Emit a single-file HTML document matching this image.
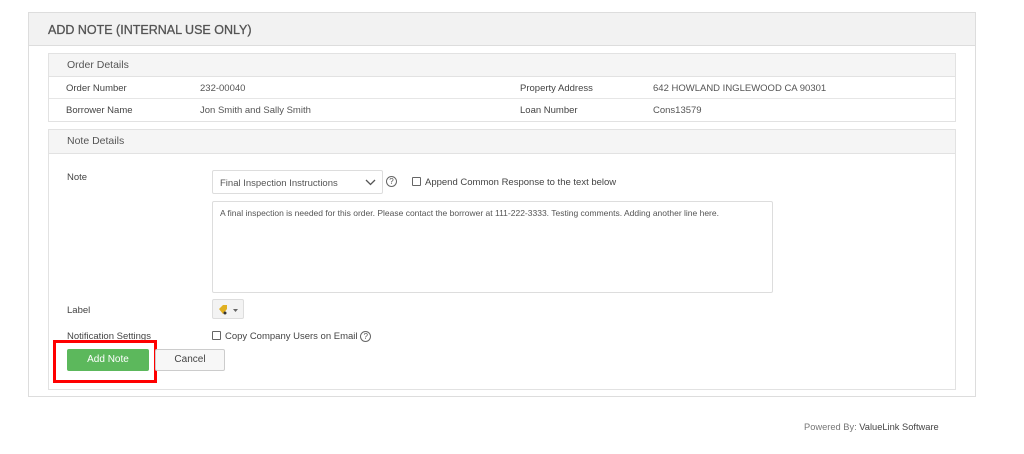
<!DOCTYPE html>
<html><head><style>
*{box-sizing:border-box;margin:0;padding:0}
body{width:1024px;height:454px;background:#fff;font-family:"Liberation Sans",sans-serif;font-size:9.5px;color:#555;position:relative;overflow:hidden}
.a{position:absolute}
.outer{left:28px;top:12px;width:948px;height:385px;border:1px solid #ddd}
.hdr{left:28px;top:12px;width:948px;height:34px;background:#f2f2f2;border:1px solid #ddd;font-size:12.5px;color:#555;padding:10px 0 0 19px;-webkit-text-stroke:0.3px #555}
.panel{border:1px solid #e2e2e2}
.ph{background:#f5f5f5;border-bottom:1px solid #e2e2e2;font-size:10.5px;color:#555;padding:5px 0 0 18px}
.row{border-bottom:1px solid #e6e6e6;height:22px}
.lbl{color:#444}
.cb{display:inline-block;width:9px;height:9px;border:1px solid #666;border-radius:1px;vertical-align:-1px;margin-right:4px}
.q{display:inline-block;width:11px;height:11px;border:1px solid #666;border-radius:50%;font-size:8px;text-align:center;line-height:9px;color:#555}
</style></head><body>
<div class="a outer"></div>
<div class="a hdr">ADD NOTE (INTERNAL USE ONLY)</div>
<div class="a panel" style="left:48px;top:53px;width:908px;height:69px">
 <div class="ph" style="height:23px">Order Details</div>
 <div class="row"></div><div class="row" style="border:0"></div>
</div>
<div class="a lbl" style="left:66px;top:83px">Order Number</div>
<div class="a" style="left:200px;top:83px">232-00040</div>
<div class="a lbl" style="left:520px;top:83px">Property Address</div>
<div class="a" style="left:653px;top:83px">642 HOWLAND INGLEWOOD CA 90301</div>
<div class="a lbl" style="left:66px;top:105px">Borrower Name</div>
<div class="a" style="left:200px;top:105px">Jon Smith and Sally Smith</div>
<div class="a lbl" style="left:520px;top:105px">Loan Number</div>
<div class="a" style="left:653px;top:105px">Cons13579</div>
<div class="a panel" style="left:48px;top:129px;width:908px;height:261px">
 <div class="ph" style="height:24px">Note Details</div>
</div>
<div class="a lbl" style="left:67px;top:172px">Note</div>
<div class="a" style="left:212px;top:170px;width:171px;height:24px;border:1px solid #ddd;border-radius:2px;padding:7px 0 0 7px">Final Inspection Instructions
<svg class="a" style="left:152px;top:8px" width="11" height="7"><path d="M1 1l4.5 4.5L10 1" stroke="#555" stroke-width="1.3" fill="none"/></svg></div>
<div class="a" style="left:386px;top:176px"><span class="q">?</span></div>
<div class="a" style="left:412px;top:177px;color:#444"><span class="cb"></span>Append Common Response to the text below</div>
<div class="a" style="left:212px;top:201px;width:561px;height:92px;border:1px solid #ddd;border-radius:2px;padding:6px 7px;font-size:8.5px">A final inspection is needed for this order. Please contact the borrower at 111-222-3333. Testing comments. Adding another line here.</div>
<div class="a lbl" style="left:67px;top:305px">Label</div>
<div class="a" style="left:212px;top:299px;width:32px;height:20px;border:1px solid #ddd;border-radius:2px;background:#f3f3f3">
<svg class="a" style="left:4px;top:4px" width="24" height="12"><path d="M2 5l4-4h4v4l-4 5z" fill="#e0b020"/><circle cx="8" cy="9" r="1.5" fill="#333"/><path d="M16 5h5l-2.5 3z" fill="#666"/></svg></div>
<div class="a lbl" style="left:67px;top:331px">Notification Settings</div>
<div class="a" style="left:212px;top:331px;color:#444"><span class="cb"></span>Copy Company Users on Email <span class="q">?</span></div>
<div class="a" style="left:53px;top:340px;width:104px;height:43px;border:3px solid #f00;background:#fff"></div>
<div class="a" style="left:67px;top:349px;width:82px;height:22px;background:#5cb85c;border-radius:2px;color:#fff;font-size:10px;text-align:center;line-height:22px">Add Note</div>
<div class="a" style="left:155px;top:349px;width:70px;height:22px;background:#f7f7f7;border:1px solid #ccc;border-radius:2px;color:#444;font-size:10px;text-align:center;line-height:20px">Cancel</div>
<div class="a" style="left:804px;top:422px;font-size:9.3px;color:#777">Powered By: <span style="color:#444">ValueLink Software</span></div>
</body></html>
